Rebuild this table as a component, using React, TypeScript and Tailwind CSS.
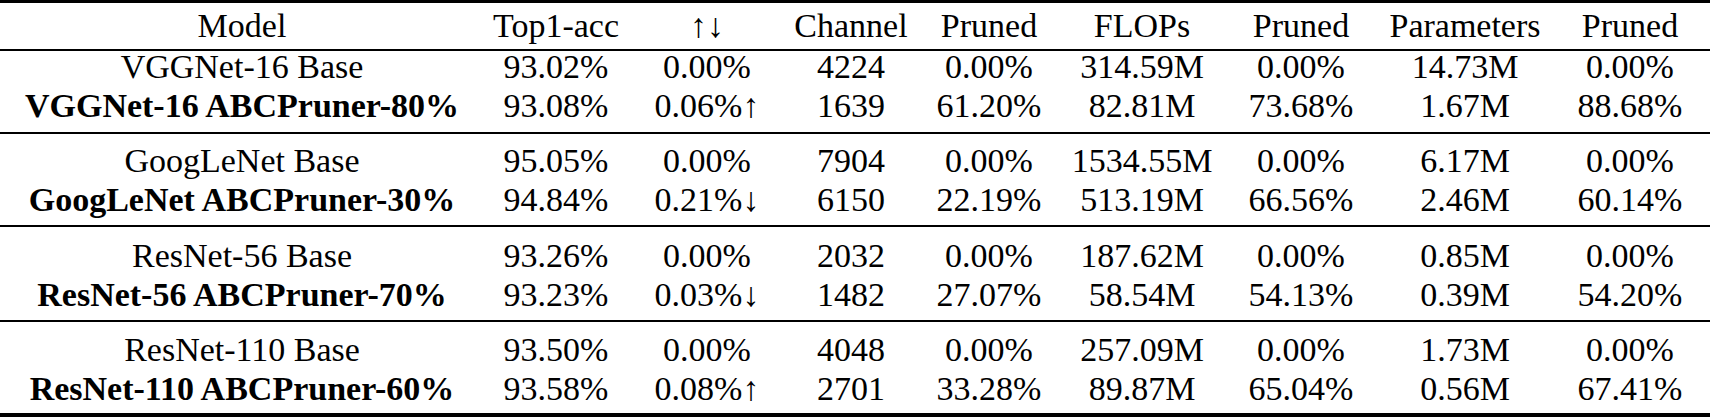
import React from 'react';

const cols = 'grid grid-cols-[484px_144px_158px_130px_146px_160px_158px_170px_160px]';

const header = ['Model', 'Top1-acc', '↑↓', 'Channel', 'Pruned', 'FLOPs', 'Pruned', 'Parameters', 'Pruned'];

const groups: { pad: string; rows: string[][] }[] = [
  {
    pad: '-mt-[4px] pb-[7px]',
    rows: [
      ['VGGNet-16 Base', '93.02%', '0.00%', '4224', '0.00%', '314.59M', '0.00%', '14.73M', '0.00%'],
      ['VGGNet-16 ABCPruner-80%', '93.08%', '0.06%↑', '1639', '61.20%', '82.81M', '73.68%', '1.67M', '88.68%'],
    ],
  },
  {
    pad: 'pt-[7px] pb-[6px]',
    rows: [
      ['GoogLeNet Base', '95.05%', '0.00%', '7904', '0.00%', '1534.55M', '0.00%', '6.17M', '0.00%'],
      ['GoogLeNet ABCPruner-30%', '94.84%', '0.21%↓', '6150', '22.19%', '513.19M', '66.56%', '2.46M', '60.14%'],
    ],
  },
  {
    pad: 'pt-[9px] pb-[6px]',
    rows: [
      ['ResNet-56 Base', '93.26%', '0.00%', '2032', '0.00%', '187.62M', '0.00%', '0.85M', '0.00%'],
      ['ResNet-56 ABCPruner-70%', '93.23%', '0.03%↓', '1482', '27.07%', '58.54M', '54.13%', '0.39M', '54.20%'],
    ],
  },
  {
    pad: 'pt-[8px] pb-[5px]',
    rows: [
      ['ResNet-110 Base', '93.50%', '0.00%', '4048', '0.00%', '257.09M', '0.00%', '1.73M', '0.00%'],
      ['ResNet-110 ABCPruner-60%', '93.58%', '0.08%↑', '2701', '33.28%', '89.87M', '65.04%', '0.56M', '67.41%'],
    ],
  },
];

export default function App() {
  return (
    <div className="w-[1710px] h-[419px] bg-white text-black font-['Liberation_Serif',serif] text-[34px]">
      <div className="border-t-[3px] border-b-[4px] border-black">
        {/* header */}
        <div className={`${cols} h-[48px] items-center border-b-2 border-black`}>
          {header.map((h, i) => (
            <div key={i} className="text-center leading-[40px]">
              {h}
            </div>
          ))}
        </div>

        {groups.map((g, gi) => (
          <div
            key={gi}
            className={`${g.pad} ${gi < groups.length - 1 ? 'border-b-2 border-black' : ''}`}
          >
            {g.rows.map((r, ri) => (
              <div key={ri} className={`${cols} h-[39px] leading-[39px]`}>
                {r.map((c, ci) => (
                  <div
                    key={ci}
                    className={`text-center whitespace-nowrap ${ci === 0 && ri === 1 ? 'font-bold' : ''}`}
                  >
                    {c}
                  </div>
                ))}
              </div>
            ))}
          </div>
        ))}
      </div>
    </div>
  );
}
